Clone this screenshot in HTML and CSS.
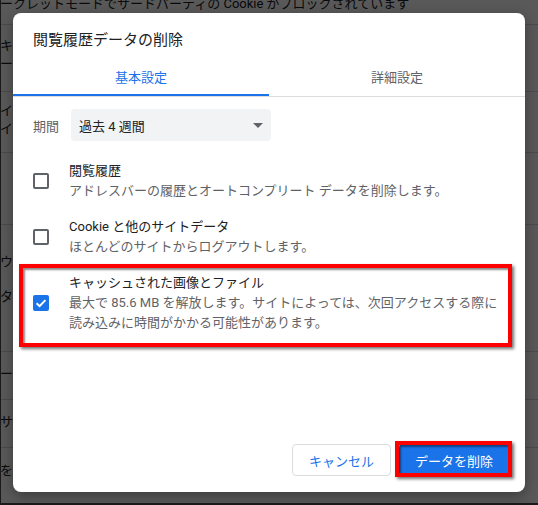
FILE: index.html
```html
<!DOCTYPE html>
<html lang="ja">
<head>
<meta charset="utf-8">
<title>閲覧履歴データの削除</title>
<link rel="stylesheet" href="styles.css">
</head>
<body>
<div class="screen">
  <div class="page">
    <div class="row r0"><div class="t top-line">ークレットモードでサードパーティの Cookie がブロックされています</div></div>
    <div class="row r1"><div class="t">キ</div><div class="t">ー</div></div>
    <div class="row r2"><div class="t">イ</div><div class="t">イ</div></div>
    <div class="row r3"></div>
    <div class="row r4"><div class="t">ウ</div><div class="t second">タ</div></div>
    <div class="row r5"><div class="t">ー</div></div>
    <div class="row r6"><div class="t">サ</div></div>
    <div class="row r7"><div class="t">を</div></div>
  </div>

  <div class="overlay">
    <div class="dialog">
      <div class="title">閲覧履歴データの削除</div>

      <div class="tabs">
        <div class="tab active">基本設定</div>
        <div class="tab">詳細設定</div>
      </div>

      <div class="period">
        <span class="label">期間</span>
        <div class="select">
          <span>過去 4 週間</span>
          <span class="arrow"></span>
        </div>
      </div>

      <div class="options">
        <div class="option">
          <span class="cb"></span>
          <div class="opt-text">
            <div class="opt-title">閲覧履歴</div>
            <div class="opt-desc">アドレスバーの履歴とオートコンプリート データを削除します。</div>
          </div>
        </div>
        <div class="option">
          <span class="cb"></span>
          <div class="opt-text">
            <div class="opt-title">Cookie と他のサイトデータ</div>
            <div class="opt-desc">ほとんどのサイトからログアウトします。</div>
          </div>
        </div>
        <div class="option">
          <span class="cb on">
            <svg width="12" height="12" viewBox="0 0 12 12"><path d="M1.6 6.2 L4.6 9.1 L10.4 3.1" fill="none" stroke="#fff" stroke-width="2"/></svg>
          </span>
          <div class="opt-text">
            <div class="opt-title">キャッシュされた画像とファイル</div>
            <div class="opt-desc">最大で 85.6 MB を解放します。サイトによっては、次回アクセスする際に読み込みに時間がかかる可能性があります。</div>
          </div>
        </div>
      </div>

      <span class="mark mark-options"></span>

      <div class="footer">
        <button class="btn btn-cancel">キャンセル</button>
        <div class="mark-wrap">
          <button class="btn btn-delete">データを削除</button>
          <span class="mark mark-button"></span>
        </div>
      </div>
    </div>
  </div>
</div>
</body>
</html>
```

FILE: styles.css
```css
body {
  margin: 0;
  font-family: Roboto, "Noto Sans CJK JP", sans-serif;
}

.screen {
  position: relative;
  width: 538px;
  height: 505px;
  overflow: hidden;
  background: #ffffff;
}

/* underlying page */
.page {
  font-size: 13px;
  color: #202124;
}
.row {
  border-bottom: 1px solid #d6d8dc;
}
.t {
  line-height: 18px;
  white-space: nowrap;
}
.top-line {
  line-height: 20px;
  margin-top: -6px;
}
.r0 { height: 30px; }
.r1 { height: 54px; padding-top: 12px; }
.r2 { height: 50px; padding-top: 10px; }
.r3 { height: 71px; }
.r4 { height: 98px; padding-top: 28px; }
.r4 .second { margin-top: 17px; }
.r5 { height: 34px; padding-top: 13px; }
.r6 { height: 34px; padding-top: 13px; }
.r7 { height: 40px; padding-top: 14px; border-bottom: none; }

/* modal layer */
.overlay {
  position: absolute;
  inset: 0;
  background: rgba(0, 0, 0, 0.65);
  padding: 13px 0 0 13px;
  box-shadow: inset 1px -2px 0 #1b1b1b;
}

.dialog {
  position: relative;
  width: 512px;
  height: 479px;
  background: #ffffff;
  border-radius: 8px;
  box-shadow: 0 4px 14px rgba(0, 0, 0, 0.35);
  display: flex;
  flex-direction: column;
}

.title {
  font-size: 15px;
  line-height: 20px;
  color: #202124;
  padding: 17px 20px 0;
}

.tabs {
  display: grid;
  grid-template-columns: 1fr 1fr;
  margin-top: 6px;
  border-bottom: 1px solid #dadce0;
}
.tab {
  height: 40px;
  display: flex;
  align-items: center;
  justify-content: center;
  font-size: 13px;
  color: #5f6368;
}
.tab.active {
  color: #1a73e8;
  box-shadow: inset 0 -2px 0 #1a73e8;
}

.period {
  display: flex;
  align-items: center;
  gap: 12px;
  margin: 12px 20px 0;
}
.label {
  font-size: 13px;
  color: #5f6368;
}
.select {
  width: 200px;
  height: 32px;
  box-sizing: border-box;
  background: #f1f3f4;
  border-radius: 4px;
  display: flex;
  align-items: center;
  justify-content: space-between;
  padding: 0 8px;
  font-size: 13px;
  color: #202124;
}
.arrow {
  width: 0;
  height: 0;
  border-left: 5px solid transparent;
  border-right: 5px solid transparent;
  border-top: 5px solid #5f6368;
}

.options {
  display: flex;
  flex-direction: column;
  gap: 16px;
  margin: 20px 20px 0;
}
.option {
  display: flex;
  align-items: center;
  gap: 20px;
}
.cb {
  flex: none;
  width: 16px;
  height: 16px;
  box-sizing: border-box;
  border: 2px solid #5f6368;
  border-radius: 2px;
  display: flex;
  align-items: center;
  justify-content: center;
}
.cb.on {
  background: #1a73e8;
  border-color: #1a73e8;
}
.opt-text {
  flex: 1;
  font-size: 13px;
  line-height: 20px;
}
.opt-title { color: #202124; }
.opt-desc { color: #5f6368; }

/* red annotation frames */
.mark {
  position: absolute;
  box-sizing: border-box;
  border: 4px solid #ff0000;
  box-shadow: 2px 2px 3px rgba(0, 0, 0, 0.55), inset 2px 2px 2px rgba(0, 0, 0, 0.45);
  pointer-events: none;
}
.mark-options {
  left: 6px;
  top: 251px;
  width: 493px;
  height: 83px;
}

.footer {
  margin-top: auto;
  display: flex;
  justify-content: flex-end;
  gap: 8px;
  padding: 0 16px 16px;
}
.btn {
  height: 32px;
  box-sizing: border-box;
  padding: 0 16px;
  font-family: inherit;
  font-size: 13px;
  border-radius: 4px;
  cursor: pointer;
}
.btn-cancel {
  background: #ffffff;
  border: 1px solid #dadce0;
  color: #1a73e8;
}
.btn-delete {
  background: #1a73e8;
  border: none;
  color: #ffffff;
}
.mark-wrap {
  position: relative;
  display: flex;
}
.mark-button {
  left: -4px;
  top: -3px;
  width: 117px;
  height: 36px;
}
```
